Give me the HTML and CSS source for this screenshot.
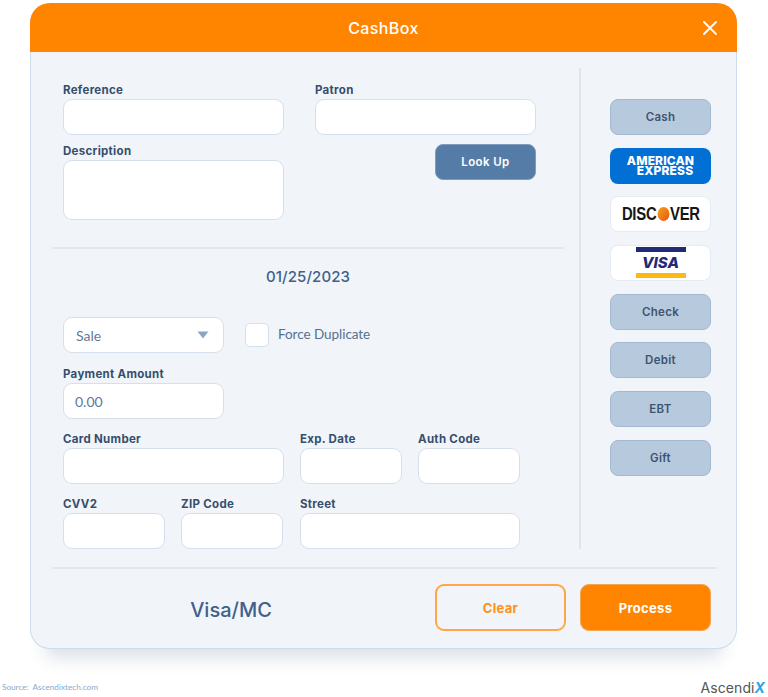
FILE: index.html
```html
<!DOCTYPE html>
<html lang="en">
<head>
<meta charset="utf-8">
<title>CashBox</title>
<link rel="stylesheet" href="styles.css">
</head>
<body>
<div class="page">
  <section class="card">
    <header class="head">
      <h1 class="title">CashBox</h1>
      <svg class="close" width="14" height="14" viewBox="0 0 14 14" aria-label="Close"><path d="M1 1L13 13M13 1L1 13" stroke="#fff" stroke-width="1.8" stroke-linecap="round"/></svg>
    </header>
    <div class="content">
      <div class="main">
        <div class="top-grid">
          <div class="field"><label class="label">Reference</label><div class="input"></div></div>
          <div class="field"><label class="label">Patron</label><div class="input"></div></div>
          <div class="field"><label class="label">Description</label><div class="input area"></div></div>
          <button class="lookup">Look Up</button>
        </div>
        <hr class="rule rule-main">
        <div class="date">01/25/2023</div>
        <div class="form">
          <div class="sale-row">
            <div class="input select w161"><span>Sale</span><svg width="12" height="8" viewBox="0 0 12 8"><path d="M0.5 0.5H11.5L6 7.5Z" fill="#8ba6c4"/></svg></div>
            <div class="check"></div>
            <span class="check-label">Force Duplicate</span>
          </div>
          <div class="field pay"><label class="label">Payment Amount</label><div class="input w161 value">0.00</div></div>
          <div class="row card-row">
            <div class="field"><label class="label">Card Number</label><div class="input w221"></div></div>
            <div class="field"><label class="label">Exp. Date</label><div class="input w102"></div></div>
            <div class="field"><label class="label">Auth Code</label><div class="input w102"></div></div>
          </div>
          <div class="row cvv-row">
            <div class="field"><label class="label">CVV2</label><div class="input w102"></div></div>
            <div class="field"><label class="label">ZIP Code</label><div class="input w102"></div></div>
            <div class="field street"><label class="label">Street</label><div class="input w220"></div></div>
          </div>
        </div>
      </div>
      <aside class="side">
        <div class="stack">
          <button class="pay-btn">Cash</button>
          <div class="logo amex"><span>AMERICAN</span><span class="amex-2">EXPRESS</span></div>
          <div class="logo discover"><div class="disc-word"><span>DISC</span><i class="disc-o"></i><span>VER</span></div></div>
          <div class="logo visa"><i class="visa-top"></i><span>VISA</span><i class="visa-bottom"></i></div>
          <button class="pay-btn">Check</button>
          <button class="pay-btn">Debit</button>
          <button class="pay-btn">EBT</button>
          <button class="pay-btn">Gift</button>
        </div>
      </aside>
    </div>
    <hr class="rule rule-foot">
    <footer class="foot">
      <div class="mode">Visa/MC</div>
      <button class="btn-clear">Clear</button>
      <button class="btn-process">Process</button>
    </footer>
  </section>
  <div class="credits">
    <span class="source">Source:&nbsp; Ascendixtech.com</span>
    <span class="brand">Ascendi<b>X</b></span>
  </div>
</div>
</body>
</html>
```
FILE: styles.css
```css
* { box-sizing: border-box; }
html, body { margin: 0; padding: 0; background: #fff; }
body { width: 768px; height: 697px; overflow: hidden; font-family: "Inter", "Liberation Sans", sans-serif; color: #3a5270; }
.page { padding: 3px 0 0 30px; }
.card {
  width: 707px; height: 646px; background: #f1f5f9;
  border: 1px solid #cddbea; border-top: 0; border-radius: 20px;
  box-shadow: 0 24px 18px -16px rgba(90, 120, 150, .24);
}
.head {
  margin: 0 -1px; height: 49px; background: #ff8500; border-radius: 20px 20px 0 0;
  display: flex; align-items: center; justify-content: center; position: relative;
}
.title { margin: 0; font-size: 16px; font-weight: 500; letter-spacing: .4px; color: #fff; }
.close { position: absolute; right: 20px; top: 18px; }
.content { display: flex; padding: 16px 0 0 21px; }
.main { width: 512px; padding: 15px 0 0 11px; }
.side { margin-left: 15px; width: 130px; border-left: 2px solid #dde5ee; padding: 31px 0 0 29px; }
.stack { display: flex; flex-direction: column; gap: 12.7px; }
.top-grid { display: grid; grid-template-columns: 221px 221px; column-gap: 31px; row-gap: 9px; }
.field { display: flex; flex-direction: column; gap: 2px; }
.label { height: 14px; line-height: 14px; font-size: 11.5px; font-weight: 700; color: #364e6c; letter-spacing: .3px; white-space: nowrap; }
.input { height: 36px; background: #fff; border: 1px solid #d5e0ec; border-radius: 9px; }
.area { height: 60px; }
.lookup {
  justify-self: end; width: 101px; height: 36px; padding: 0; border: 1px solid #7e9cbb; border-radius: 8px;
  background: #557ca6; color: #fff; font: 600 11.5px "Inter", sans-serif; letter-spacing: .4px;
}
.rule { border: 0; margin: 0; height: 2px; background: #e0e7ef; }
.rule-main { margin: 27px 0 0 -11px; }
.date { margin-top: 18px; height: 20px; line-height: 20px; text-align: center; font-size: 15px; font-weight: 500; letter-spacing: .1px; color: #41608a; padding-right: 11px; }
.form { margin-top: 30px; }
.sale-row { display: flex; align-items: center; height: 36px; }
.select { display: flex; align-items: center; justify-content: space-between; padding: 0 14px 0 12px; }
.select span, .value { font: 400 14px "Lato", sans-serif; color: #5f7a99; }
.w161 { width: 161px; }
.w221 { width: 221px; }
.w220 { width: 220px; }
.w102 { width: 102px; }
.check { width: 24px; height: 24px; margin: -1px 0 0 21px; background: #fff; border: 1px solid #d5e0ec; border-radius: 5px; }
.check-label { margin: -2px 0 0 9px; font: 400 13.5px "Lato", sans-serif; letter-spacing: -.05px; color: #54708f; }
.pay { margin-top: 14px; }
.value { display: flex; align-items: center; padding-left: 11px; }
.row { display: flex; gap: 16px; }
.street { margin-left: 1px; }
.card-row { margin-top: 13px; }
.cvv-row { margin-top: 13px; }
.pay-btn {
  width: 101px; height: 36px; padding: 0; border: 1px solid #a3b9d1; border-radius: 8px; background: #b7c9dc;
  color: #3d5472; font: 600 11.5px "Inter", sans-serif; letter-spacing: .3px;
}
.logo { width: 101px; height: 36px; border-radius: 8px; display: flex; align-items: center; justify-content: center; }
.amex { background: #026fd4; color: #fff; flex-direction: column; font: 800 12px/10px "Inter", sans-serif; letter-spacing: .15px; }
.amex-2 { padding-left: 9px; }
.discover { background: #fff; border: 1px solid #e4ebf3; }
.disc-word { display: flex; align-items: center; color: #161616; font: 700 17.5px "Liberation Sans", sans-serif; letter-spacing: -.3px; transform: scaleX(.85); }
.disc-o { width: 14px; height: 14px; border-radius: 50%; background: linear-gradient(135deg, #f9a01b, #e4570f); margin: 0 1px; }
.visa { background: #fff; border: 1px solid #e4ebf3; color: #1f2a78; font: italic 800 15px/16px "Inter", sans-serif; flex-direction: column; justify-content: space-between; }
.visa-top, .visa-bottom { display: block; width: 50px; height: 5px; background: #1f2a78; }
.visa-top { margin-top: 1px; }
.visa-bottom { background: #fdb913; margin-bottom: 2px; }
.rule-foot { width: 665px; margin: 18px 0 0 21px; height: 1.5px; }
.foot { display: flex; align-items: center; padding: 15.5px 0 0 21px; }
.mode { width: 383px; text-align: center; padding: 4px 25px 0 0; font-size: 20px; font-weight: 500; color: #41608a; }
.btn-clear, .btn-process { width: 131px; height: 47px; border-radius: 9px; padding: 0; font: 700 13px "Inter", sans-serif; letter-spacing: .3px; }
.btn-clear { background: transparent; border: 2px solid #ffa648; color: #ff9018; }
.btn-process { margin-left: 14px; background: #ff8500; border: 1px solid #f5a552; color: #fff; }
.credits { display: flex; justify-content: space-between; align-items: center; margin: 28px 0 0 -28px; width: 763px; height: 20px; }
.source { font: 400 8.2px "Lato", sans-serif; color: #8aa8cc; }
.brand { font: 400 14px "Inter", sans-serif; color: #555; letter-spacing: .1px; }
.brand b { font-weight: 700; color: #2ba7e8; font-style: italic; }
```
